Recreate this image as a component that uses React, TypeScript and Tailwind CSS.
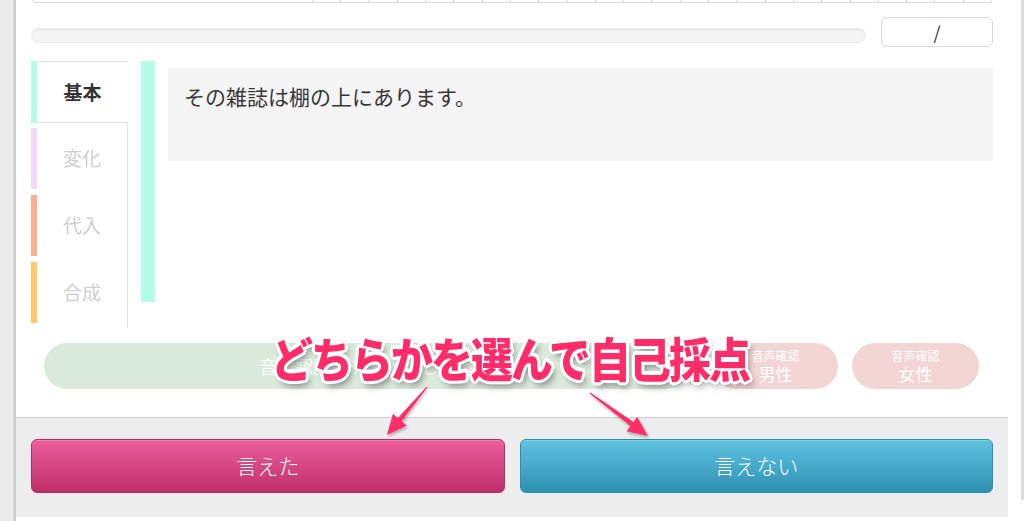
import React from "react";

const tabs = [
  { label: "変化", color: "bg-[#f0dbfd]" },
  { label: "代入", color: "bg-[#ffae8c]" },
  { label: "合成", color: "bg-[#ffc96b]" },
];

function Ruler() {
  const segs = Array.from({ length: 24 });
  return (
    <div className="ml-[2px] mr-[1px] h-[3px] border-b border-x border-[#dedede] rounded-b-[2px] flex">
      <div className="flex-1" />
      {segs.map((_, i) => (
        <div key={i} className="w-[28.3px] border-l border-[#d8d8d8]" />
      ))}
    </div>
  );
}

function Arrows() {
  return (
    <svg
      className="absolute left-0 top-0 pointer-events-none"
      width="1024"
      height="521"
      viewBox="0 0 1024 521"
    >
      <defs>
        <filter id="sh" x="-20%" y="-20%" width="140%" height="140%">
          <feDropShadow dx="1" dy="2" stdDeviation="1.5" floodColor="#000" floodOpacity="0.3" />
        </filter>
      </defs>
      <polygon
        filter="url(#sh)"
        fill="#fe2d69"
        points="427.5,387.3 401.7,421.2 406.7,425.4 387,435 392.9,413.8 397.9,418 426.5,386.7"
      />
      <polygon
        filter="url(#sh)"
        fill="#fe2d69"
        points="589.6,393.4 630.4,426.1 626.5,431.3 648,436 637.3,416.9 633.4,422.1 590.4,392.6"
      />
    </svg>
  );
}

export default function App() {
  return (
    <div className="relative w-[1024px] h-[521px] bg-white flex overflow-hidden font-['Noto_Sans_CJK_JP','Noto_Sans',sans-serif]">
      {/* left strip */}
      <div className="w-[13px] h-full bg-[#ececec]" />
      <div className="w-[3px] h-full bg-gradient-to-r from-[#dadada] to-[#c6c6c6]" />

      {/* main */}
      <div className="w-[1004px] h-full flex flex-col">
        <div className="pl-[15px] pr-[27px] flex flex-col">
          <Ruler />

          {/* progress row */}
          <div className="mt-[14px] flex items-start gap-[15px]">
            <div className="flex-1 mt-[11px] h-[15px] rounded-full bg-[#f4f4f4] border border-[#ececec] shadow-[inset_0_1px_2px_rgba(0,0,0,0.06)]" />
            <div className="w-[112px] h-[30px] rounded-[6px] border border-[#d9d9d9] flex items-center justify-center text-[18px] text-[#333] leading-none">
              /
            </div>
          </div>

          {/* tabs + content */}
          <div className="mt-[14px] flex">
            <div className="w-[97px] flex flex-col">
              <div className="h-[62px] flex">
                <div className="w-[6px] h-full bg-[#b3fde9]" />
                <div className="flex-1 border-t border-b border-[#e3e3e3] flex items-center justify-center text-[19px] font-bold text-[#333]">
                  基本
                </div>
              </div>
              <div className="border-r border-[#e3e3e3] pt-[5px] pb-[5px] flex flex-col gap-[6px]">
                {tabs.map((t) => (
                  <div key={t.label} className="h-[61px] flex">
                    <div className={`w-[6px] h-full ${t.color}`} />
                    <div className="flex-1 flex items-center justify-center text-[19px] text-[#cfcfcf]">
                      {t.label}
                    </div>
                  </div>
                ))}
              </div>
            </div>

            <div className="ml-[13px] w-[14px] h-[241px] bg-[#b3fde9]" />

            <div className="ml-[13px] flex-1 mt-[7px]">
              <div className="h-[93px] bg-[#f4f4f4] pl-[16px] pt-[14px] text-[21px] text-[#383838] leading-[1.4]">
                その雑誌は棚の上にあります。
              </div>
            </div>
          </div>

          {/* pills */}
          <div className="mt-[15px] px-[13px] flex items-center">
            <div className="w-[646px] h-[46px] rounded-full bg-[#dbebdb] flex items-center justify-center text-[18px] text-white/80">
              音声認識でチェックしよう
            </div>
            <div className="ml-[23px] w-[125px] h-[46px] rounded-full bg-[#f3d5d3] flex flex-col items-center justify-center text-white leading-none">
              <span className="text-[12px]">音声確認</span>
              <span className="text-[17px] mt-[3px]">男性</span>
            </div>
            <div className="ml-[14px] w-[127px] h-[46px] rounded-full bg-[#f3d5d3] flex flex-col items-center justify-center text-white leading-none">
              <span className="text-[12px]">音声確認</span>
              <span className="text-[17px] mt-[3px]">女性</span>
            </div>
          </div>
        </div>

        {/* footer */}
        <div className="mt-[28px] w-[992px] h-[100px] bg-[#ededed] border-t border-[#cfcfcf] px-[15px] pt-[21px] flex gap-[15px]">
          <button className="flex-1 h-[54px] rounded-[6px] border border-[#b72c65] bg-gradient-to-b from-[#ec5e9c] to-[#bf2e6b] shadow-[inset_0_1px_0_rgba(255,255,255,0.25)] text-white text-[21px] font-light flex items-center justify-center">
            言えた
          </button>
          <button className="flex-1 h-[54px] rounded-[6px] border border-[#2c8eae] bg-gradient-to-b from-[#5fc3e2] to-[#2d91b2] shadow-[inset_0_1px_0_rgba(255,255,255,0.25)] text-white text-[21px] font-light flex items-center justify-center">
            言えない
          </button>
        </div>
      </div>

      {/* right strip */}
      <div className="w-[4px] h-full flex">
        <div className="ml-[1px] w-[3px] h-[500px] bg-[#dcdcdc] rounded-b-[2px]" />
      </div>

      {/* annotation */}
      <div className="absolute left-[271px] top-[333px] origin-top scale-y-[1.12] text-[42px] leading-none font-black tracking-[-2px] text-[#fe2d69] whitespace-nowrap [text-shadow:3px_0_0_#fff,-3px_0_0_#fff,0_3px_0_#fff,0_-3px_0_#fff,2px_2px_0_#fff,-2px_-2px_0_#fff,2px_-2px_0_#fff,-2px_2px_0_#fff,3px_5px_7px_rgba(0,0,0,0.45)]">
        どちらかを選んで自己採点
      </div>
      <Arrows />
    </div>
  );
}
